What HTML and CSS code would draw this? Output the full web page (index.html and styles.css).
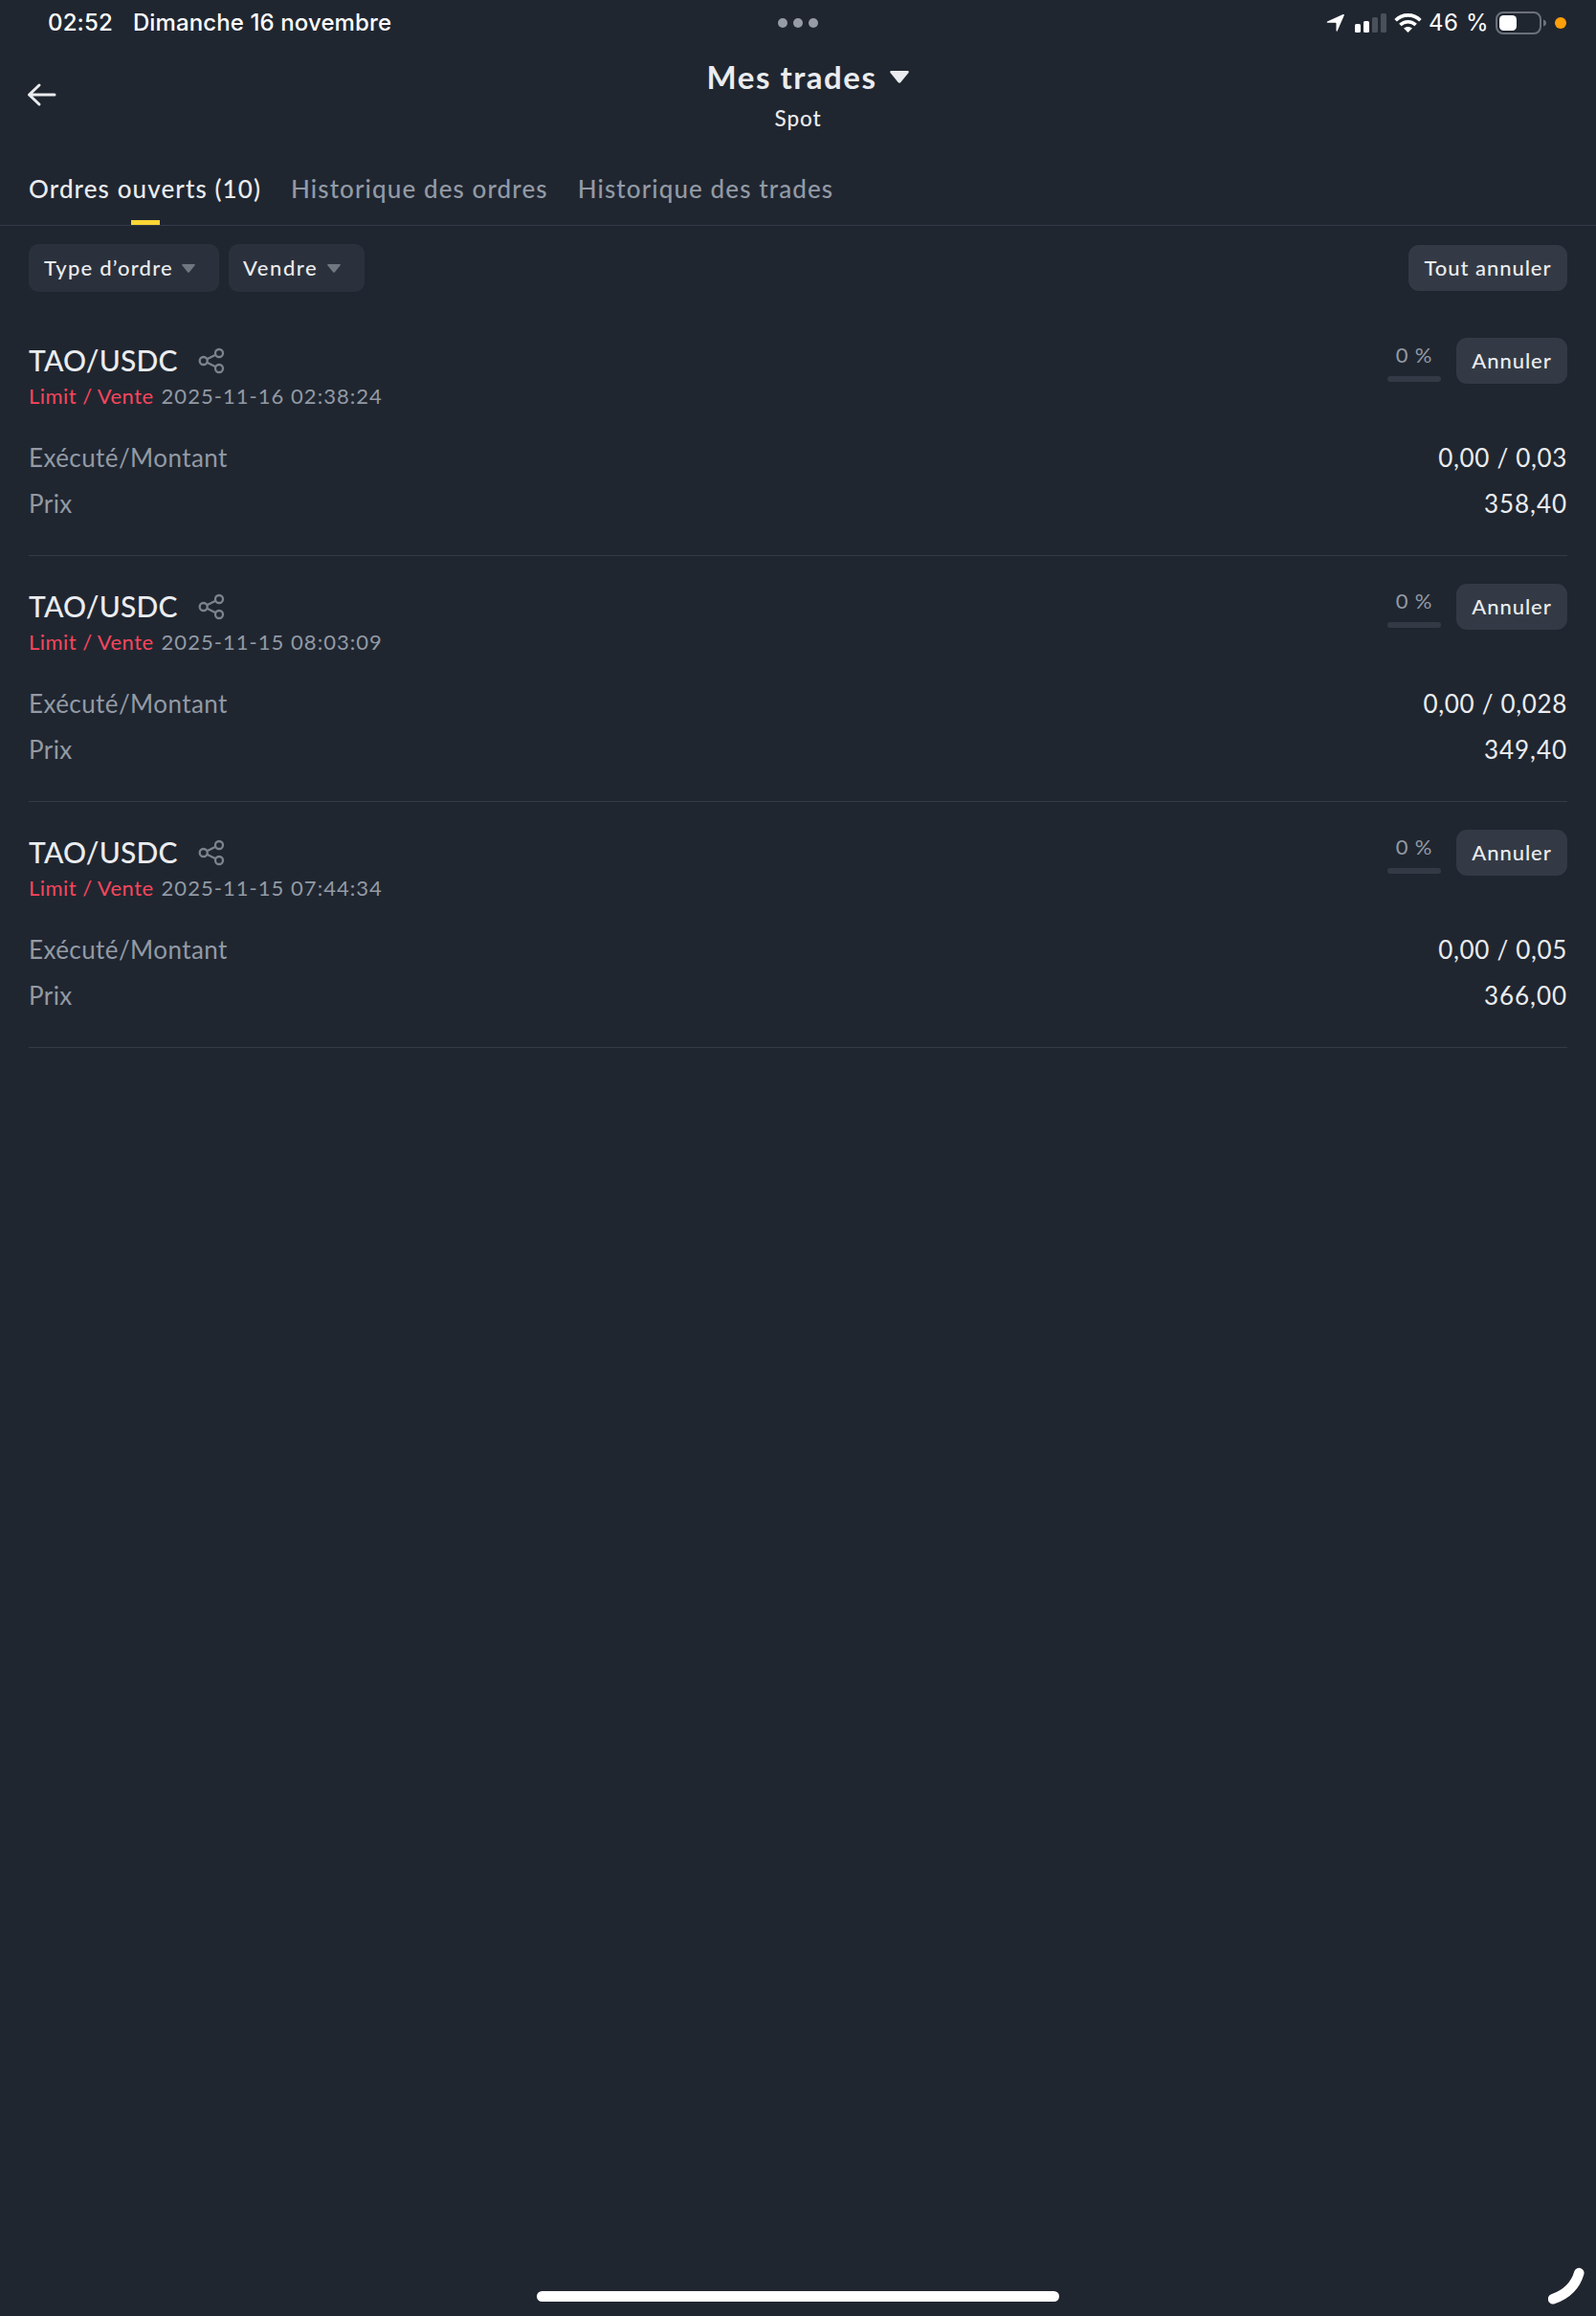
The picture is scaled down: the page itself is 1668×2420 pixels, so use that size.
FILE: index.html
```html
<!DOCTYPE html>
<html lang="fr">
<head>
<meta charset="utf-8">
<title>Mes trades</title>
<link rel="stylesheet" href="styles.css">
</head>
<body>
<div class="screen">
  <div class="status">
    <div class="status-left"><span class="time">02:52</span><span class="day">Dimanche 16 novembre</span></div>
    <div class="multitask"><i></i><i></i><i></i></div>
    <div class="status-right">
      <svg class="locate" width="20" height="20" viewBox="0 0 20 20"><path d="M1.1 8.6 17.6 1.1Q19.3.6 18.7 2.3L11.7 18.2Q11 19.4 10.5 18V10.6Q10.4 9.9 9.7 9.8H1.4Q0 9.3 1.1 8.6Z" fill="#fff"/></svg>
      <svg class="signal" width="33" height="20" viewBox="0 0 33 20"><rect y="11" width="6" height="9" rx="1.6" fill="#fff"/><rect x="9" y="8" width="6" height="12" rx="1.6" fill="#fff"/><rect x="18" y="4" width="6" height="16" rx="1.6" fill="#4a505a"/><rect x="27" width="6" height="20" rx="1.6" fill="#4a505a"/></svg>
      <svg class="wifi" width="29" height="20" viewBox="0 0 29 20"><g fill="none" stroke="#fff" stroke-width="3.6"><path d="M1.6 7.3C8.8.1 20.2.1 27.4 7.3"/><path d="M6.4 12.1C10.9 7.6 18.1 7.6 22.6 12.1"/></g><path d="M14.5 20 10 15.6C12.5 13.3 16.5 13.3 19 15.6Z" fill="#fff"/></svg>
      <span class="percent">46 %</span>
      <svg class="battery" width="53" height="24" viewBox="0 0 53 24"><rect x="1" y="1" width="46" height="22" rx="7" fill="none" stroke="#6b7079" stroke-width="2"/><rect x="4" y="4" width="18" height="16" rx="4.5" fill="#fff"/><path d="M50 8.5Q53 9.5 53 12T50 15.5Z" fill="#6b7079"/></svg>
      <i class="mic-dot"></i>
    </div>
  </div>

  <header class="header">
    <svg class="back" width="32" height="26" viewBox="0 0 32 26"><path d="M13 3 2.5 13 13 23M2.5 13H29" fill="none" stroke="#eaecef" stroke-width="3" stroke-linecap="round" stroke-linejoin="round"/></svg>
    <div class="heading">
      <h1 class="title">Mes trades <svg width="20" height="13" viewBox="0 0 20 13"><path d="M1.5 0H18.5Q20.6.3 19.3 2.2L11.4 12Q10 13.6 8.6 12L.7 2.2Q-.6.3 1.5 0Z" fill="#eaecef"/></svg></h1>
      <div class="account">Spot</div>
    </div>
  </header>

  <nav class="tabs">
    <a class="tab tab-active">Ordres ouverts (10)</a>
    <a class="tab">Historique des ordres</a>
    <a class="tab">Historique des trades</a>
  </nav>

  <div class="filters">
    <div class="filter filter-type"><span>Type d’ordre</span><svg width="14" height="9" viewBox="0 0 14 9"><path d="M1 0H13Q14.4.2 13.5 1.5L8 8.3Q7 9.4 6 8.3L.5 1.5Q-.4.2 1 0Z" fill="#717781"/></svg></div>
    <div class="filter filter-side"><span>Vendre</span><svg width="14" height="9" viewBox="0 0 14 9"><path d="M1 0H13Q14.4.2 13.5 1.5L8 8.3Q7 9.4 6 8.3L.5 1.5Q-.4.2 1 0Z" fill="#717781"/></svg></div>
    <button class="button cancel-all">Tout annuler</button>
  </div>

  <main class="orders">
    <article class="order">
      <div class="order-head">
        <div class="order-id">
          <div class="pair">TAO/USDC<svg class="share" width="28" height="28" viewBox="0 0 28 28"><g fill="none" stroke="#7d838d" stroke-width="2.3"><circle cx="5.7" cy="14" r="4"/><circle cx="22" cy="6" r="4"/><circle cx="22" cy="22" r="4"/><path d="M9.3 12.2 18.4 7.8M9.3 15.8 18.4 20.2"/></g></svg></div>
          <div class="meta"><span class="side">Limit / Vente</span><time>2025-11-16 02:38:24</time></div>
        </div>
        <div class="progress"><span>0 %</span><div class="track"></div></div>
        <button class="button">Annuler</button>
      </div>
      <dl class="details">
        <div class="row"><dt>Exécuté/Montant</dt><dd>0,00 / 0,03</dd></div>
        <div class="row"><dt>Prix</dt><dd class="price">358,40</dd></div>
      </dl>
    </article>
    <article class="order">
      <div class="order-head">
        <div class="order-id">
          <div class="pair">TAO/USDC<svg class="share" width="28" height="28" viewBox="0 0 28 28"><g fill="none" stroke="#7d838d" stroke-width="2.3"><circle cx="5.7" cy="14" r="4"/><circle cx="22" cy="6" r="4"/><circle cx="22" cy="22" r="4"/><path d="M9.3 12.2 18.4 7.8M9.3 15.8 18.4 20.2"/></g></svg></div>
          <div class="meta"><span class="side">Limit / Vente</span><time>2025-11-15 08:03:09</time></div>
        </div>
        <div class="progress"><span>0 %</span><div class="track"></div></div>
        <button class="button">Annuler</button>
      </div>
      <dl class="details">
        <div class="row"><dt>Exécuté/Montant</dt><dd>0,00 / 0,028</dd></div>
        <div class="row"><dt>Prix</dt><dd class="price">349,40</dd></div>
      </dl>
    </article>
    <article class="order">
      <div class="order-head">
        <div class="order-id">
          <div class="pair">TAO/USDC<svg class="share" width="28" height="28" viewBox="0 0 28 28"><g fill="none" stroke="#7d838d" stroke-width="2.3"><circle cx="5.7" cy="14" r="4"/><circle cx="22" cy="6" r="4"/><circle cx="22" cy="22" r="4"/><path d="M9.3 12.2 18.4 7.8M9.3 15.8 18.4 20.2"/></g></svg></div>
          <div class="meta"><span class="side">Limit / Vente</span><time>2025-11-15 07:44:34</time></div>
        </div>
        <div class="progress"><span>0 %</span><div class="track"></div></div>
        <button class="button">Annuler</button>
      </div>
      <dl class="details">
        <div class="row"><dt>Exécuté/Montant</dt><dd>0,00 / 0,05</dd></div>
        <div class="row"><dt>Prix</dt><dd class="price">366,00</dd></div>
      </dl>
    </article>
  </main>

  <div class="home-bar"></div>
  <svg class="corner" width="40" height="40" viewBox="0 0 40 40"><path d="M5 34.3Q26.7 26.7 32.3 7" fill="none" stroke="#fff" stroke-width="10.5" stroke-linecap="round"/></svg>
</div>
</body>
</html>
```
FILE: styles.css
```css
* { box-sizing: border-box; margin: 0; }

body {
  background: #202630;
  color: #eaecef;
  font-family: Lato, "Open Sans", sans-serif;
}

svg { display: block; flex: none; }

.screen {
  position: relative;
  display: flex;
  flex-direction: column;
  height: 2420px;
  overflow: hidden;
}

/* Status bar */
.status {
  display: grid;
  grid-template-columns: 1fr auto 1fr;
  align-items: center;
  height: 48px;
  padding: 0 31px 0 50px;
  font: 500 24px/48px Inter, sans-serif;
  color: #fff;
}
.status-left { display: flex; gap: 21px; width: 380px; }
.time { letter-spacing: 0.15px; }
.day { letter-spacing: 0.11px; }
.multitask { display: flex; gap: 6px; margin-right: 19px; }
.multitask i { width: 10px; height: 10px; border-radius: 50%; background: #969ba5; }
.status-right { display: flex; justify-content: flex-end; align-items: center; }
.locate { margin-right: 10px; }
.signal { margin-right: 8px; }
.wifi { margin-right: 7px; }
.percent { width: 61px; margin-right: 9px; font-weight: 400; letter-spacing: 0.6px; white-space: nowrap; }
.battery { margin-right: 9px; }
.mic-dot { width: 12px; height: 12px; border-radius: 50%; background: #ff9f0a; }

/* Header */
.header {
  display: grid;
  grid-template-columns: 80px 1fr 80px;
  height: 90px;
  padding-top: 12px;
}
.back { margin: 26px 0 0 28px; }
.heading { display: flex; flex-direction: column; align-items: center; }
.title {
  display: flex;
  align-items: center;
  gap: 14px;
  padding-left: 21px;
  font-size: 33px;
  font-weight: 700;
  line-height: 40px;
  letter-spacing: 1.5px;
}
.account { margin-top: 10px; font-size: 22.5px; font-weight: 500; line-height: 28px; letter-spacing: 0.9px; }

/* Tabs */
.tabs {
  display: flex;
  gap: 31px;
  height: 98px;
  padding: 43px 30px 0;
  border-bottom: 1px solid #333b47;
}
.tab {
  display: flex;
  flex-direction: column;
  justify-content: space-between;
  align-items: center;
  color: #929aa5;
  font-size: 26px;
  font-weight: 500;
  line-height: 32px;
  letter-spacing: 1.1px;
}
.tab-active { color: #eaecef; }
.tab-active::after { content: ""; width: 30px; height: 5px; background: #fcd535; }

/* Filters */
.filters { display: flex; align-items: center; gap: 10px; padding: 19px 30px 0; }
.filter {
  display: flex;
  align-items: center;
  justify-content: space-between;
  height: 50px;
  padding: 0 25px 0 16px;
  border-radius: 10px;
  background: #2b313c;
  font-size: 22px;
  font-weight: 500;
  line-height: 28px;
}
.filter span { padding-bottom: 1px; }
.filter-type { width: 199px; letter-spacing: 1.21px; }
.filter-side { width: 142px; padding-left: 15px; letter-spacing: 1.54px; }
.button {
  width: 116px;
  height: 48px;
  padding: 0;
  border: 0;
  border-radius: 11px;
  background: #343a45;
  color: #eaecef;
  font: 500 22px/48px Lato, "Open Sans", sans-serif;
  letter-spacing: 0.95px;
}
.cancel-all { width: 166px; margin-left: auto; }

/* Orders */
.orders { padding: 19px 30px 0; }
.order { height: 257px; padding-top: 29px; border-bottom: 1px solid #333b47; }
.order-head { display: flex; align-items: flex-start; }
.order-id { flex: 1; padding-top: 5px; }
.pair {
  display: flex;
  align-items: center;
  gap: 21px;
  font-size: 30px;
  font-weight: 500;
  line-height: 36px;
  letter-spacing: 0.2px;
}
.share { margin-top: 2px; }
.meta { display: flex; gap: 8px; margin-top: 6px; font-size: 22px; line-height: 28px; color: #929aa5; }
.side { color: #f6465d; letter-spacing: 0.45px; }
.meta time { letter-spacing: 1.04px; }
.progress {
  display: flex;
  flex-direction: column;
  align-items: center;
  width: 56px;
  margin: 4px 16px 0 0;
  color: #929aa5;
  font-size: 22px;
  line-height: 28px;
  letter-spacing: 0.8px;
}
.track { width: 56px; height: 6px; margin-top: 8px; border-radius: 3px; background: #343a45; }
.details { padding-top: 26px; font-size: 26px; line-height: 48px; }
.row { display: flex; justify-content: space-between; }
.row dt { color: #929aa5; letter-spacing: 0.42px; }
.row dd { letter-spacing: 0.67px; }
.row .price { letter-spacing: 0.96px; }

/* System overlays */
.home-bar {
  width: 546px;
  height: 11px;
  margin: auto auto 15px;
  border-radius: 6px;
  background: #fff;
}
.corner { position: absolute; right: 10px; bottom: 12px; }
```
